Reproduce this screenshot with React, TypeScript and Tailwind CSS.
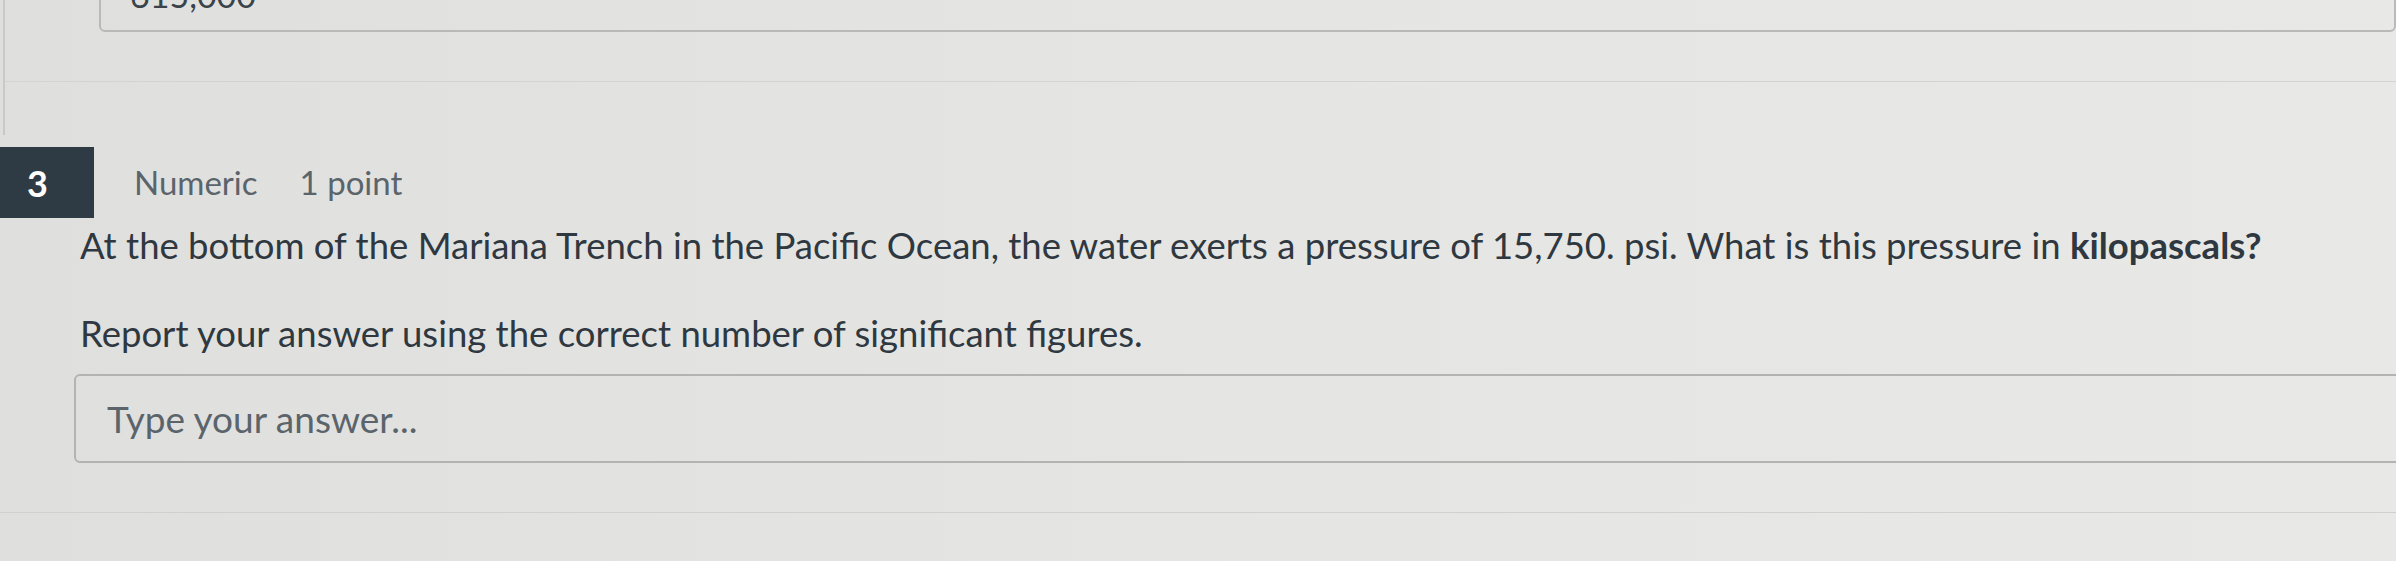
export default function App() {
  return (
    <div
      className="w-[2396px] h-[561px] overflow-hidden bg-gradient-to-r from-[#dfe0de] via-[#e5e6e4] to-[#e8e9e7] text-[#2f3840]"
      style={{ fontFamily: 'Lato, "Open Sans", sans-serif' }}
    >
      {/* previous question tail */}
      <div className="h-[135px] ml-[3px] border-l-2 border-[#c9cac8] flex flex-col">
        <div className="h-[82px] border-b border-[#d3d4d2] flex flex-col">
          <div className="ml-[94px] -mt-[40px] h-[72px] rounded-md border-2 border-[#b9bab8] pl-[29px] pt-[16px] text-[34px] leading-none text-[#3a434a]">
            615,000
          </div>
        </div>
      </div>

      {/* question header */}
      <div className="mt-[12px] flex items-center">
        <div className="w-[94px] h-[71px] bg-[#2f3b44] flex items-center pl-[27px] text-white text-[36px] font-bold">
          3
        </div>
        <div className="ml-[40px] flex items-center gap-[42px] text-[33px] text-[#5b646b]">
          <span>Numeric</span>
          <span>1 point</span>
        </div>
      </div>

      {/* question body */}
      <div className="pl-[80px] mt-[5px] text-[36.5px] leading-[44px]">
        <p>
          At the bottom of the Mariana Trench in the Pacific Ocean, the water exerts a pressure of 15,750. psi. What
          is this pressure in <span className="font-bold">kilopascals?</span>
        </p>
        <p className="mt-[44px]">Report your answer using the correct number of significant figures.</p>
      </div>

      {/* answer input */}
      <div className="mt-[19px] ml-[74px] -mr-[10px] h-[89px] rounded-md border-2 border-[#b3b4b2] flex items-center pl-[31px] text-[37px] text-[#5b646b]">
        Type your answer...
      </div>

      <div className="mt-[49px] border-b border-[#d0d1cf]" />
    </div>
  );
}
